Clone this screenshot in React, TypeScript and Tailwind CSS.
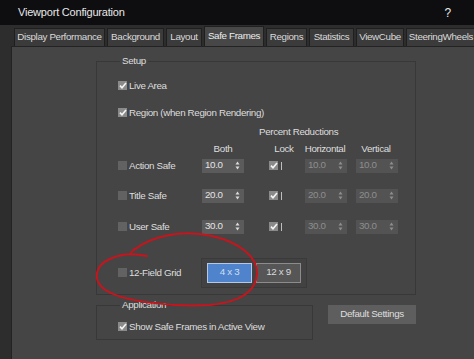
import React from "react";

const tabs = [
  { name: "Display Performance", w: "w-[91px]" },
  { name: "Background", w: "w-[57px]" },
  { name: "Layout", w: "w-[36px]" },
  { name: "Safe Frames", w: "w-[60px]", active: true },
  { name: "Regions", w: "w-[41px]" },
  { name: "Statistics", w: "w-[45px]" },
  { name: "ViewCube", w: "w-[48px]" },
  { name: "SteeringWheels", w: "w-[70px]" },
];

function Check({ on }: { on?: boolean }) {
  return (
    <span
      className={`flex h-[9px] w-[9px] shrink-0 items-center justify-center ${
        on ? "bg-[#8a8a8a]" : "bg-[#626262]"
      }`}
    >
      {on && (
        <svg width="8" height="7" viewBox="0 0 8 7">
          <path d="M1 3.6 L3 5.8 L7 1" stroke="#f4f4f4" strokeWidth="1.6" fill="none" />
        </svg>
      )}
    </span>
  );
}

function Spinner({ value, disabled }: { value: string; disabled?: boolean }) {
  return (
    <div
      className={`flex h-[14px] w-[42px] items-center justify-between pl-[3px] pr-[4px] ${
        disabled ? "bg-[#535353] text-[#8e8e8e]" : "bg-[#5b5b5b] text-[#e4e4e4]"
      }`}
    >
      <span>{value}</span>
      <svg width="5" height="9" viewBox="0 0 5 9">
        <path d="M2.5 0.5 L4.5 3.5 L0.5 3.5 Z" fill={disabled ? "#8e8e8e" : "#dcdcdc"} />
        <path d="M2.5 8.5 L4.5 5.5 L0.5 5.5 Z" fill={disabled ? "#8e8e8e" : "#dcdcdc"} />
      </svg>
    </div>
  );
}

function SafeRow({ label, value, mt }: { label: string; value: string; mt: string }) {
  return (
    <div className={`flex h-[14px] items-center ${mt}`}>
      <div className="flex w-[84px] items-center gap-[2px]">
        <Check />
        <span className="translate-y-[1px]">{label}</span>
      </div>
      <Spinner value={value} />
      <div className="ml-[25px] flex w-[15px] items-center gap-[3px]">
        <Check on />
        <span className="h-[8px] w-[1px] bg-[#bdbdbd]" />
      </div>
      <div className="ml-[21px]">
        <Spinner value={value} disabled />
      </div>
      <div className="ml-[9px]">
        <Spinner value={value} disabled />
      </div>
    </div>
  );
}

export default function App() {
  return (
    <div className="relative flex h-[359px] w-[474px] flex-col overflow-hidden bg-[#2d2d2d] font-['Liberation_Sans',Arial,sans-serif] text-[9.8px] tracking-[-0.35px] text-[#dedede]">
      <div className="flex h-[25px] shrink-0 items-center justify-between bg-[#0e0e11] pl-[18px] pr-[23px] text-[11px] tracking-[-0.2px] text-[#e8e8e8]">
        <span>Viewport Configuration</span>
        <span className="text-[12px]">?</span>
      </div>

      <div className="flex flex-1">
        <div className="w-[11px] shrink-0" />
        <div className="flex flex-1 flex-col">
          <div className="flex h-[21px] shrink-0 items-end gap-[2px] pl-[3px]">
            {tabs.map((t) => (
              <div
                key={t.name}
                className={`flex h-[18px] shrink-0 items-center justify-center whitespace-nowrap border border-b-0 border-[#1f1f1f] ${t.w} ${
                  t.active ? "h-[20px] bg-[#474747] text-[#ececec]" : "bg-[#3b3b3b] text-[#dadada]"
                }`}
              >
                {t.name}
              </div>
            ))}
          </div>

          <div className="flex flex-1 flex-col border-l border-t border-[#232323] bg-[#454545] pl-[84px] pt-[7px]">
            <fieldset className="h-[241px] w-[320px] border border-[#383838] pl-[21px]">
              <legend className="ml-[2px] px-[2px]">Setup</legend>
              <div className="mt-[10px] flex h-[14px] items-center gap-[2px]">
                <Check on />
                <span className="translate-y-[1px]">Live Area</span>
              </div>
              <div className="mt-[13px] flex h-[14px] items-center gap-[2px]">
                <Check on />
                <span className="translate-y-[1px]">Region (when Region Rendering)</span>
              </div>
              <div className="ml-[141px] mt-[5px] h-[12px]">Percent Reductions</div>
              <div className="mt-[5px] flex h-[12px]">
                <span className="ml-[84px] w-[42px] text-center">Both</span>
                <span className="ml-[25px] w-[30px] text-center">Lock</span>
                <span className="ml-[5px] w-[42px] text-center">Horizontal</span>
                <span className="ml-[9px] w-[42px] text-center">Vertical</span>
              </div>
              <SafeRow label="Action Safe" value="10.0" mt="mt-[5px]" />
              <SafeRow label="Title Safe" value="20.0" mt="mt-[16px]" />
              <SafeRow label="User Safe" value="30.0" mt="mt-[17px]" />

              <div className="mt-[24px] flex items-center">
                <div className="flex w-[83px] items-center gap-[2px]">
                  <Check />
                  <span className="translate-y-[1px]">12-Field Grid</span>
                </div>
                <div className="flex h-[30px] items-center gap-[4px] border border-[#3a3a3a] bg-[#424242] px-[5px]">
                  <div className="flex h-[20px] w-[45px] items-center justify-center border border-[#b4c9e6] bg-[#4f84cc] text-[#cfdff3]">
                    4 x 3
                  </div>
                  <div className="flex h-[20px] w-[45px] items-center justify-center border border-[#8c8c8c] bg-[#565656] text-[#dadada]">
                    12 x 9
                  </div>
                </div>
              </div>
            </fieldset>

            <div className="mt-[3px] flex items-start">
              <fieldset className="h-[42px] w-[217px] border border-[#383838] pl-[21px]">
                <legend className="ml-[2px] px-[2px]">Application</legend>
                <div className="mt-[7px] flex h-[14px] items-center gap-[2px]">
                  <Check on />
                  <span className="translate-y-[1px]">Show Safe Frames in Active View</span>
                </div>
              </fieldset>
              <div className="ml-[15px] mt-[7px] flex h-[19px] w-[88px] items-center justify-center bg-[#5e5e5e] text-[#dedede]">
                Default Settings
              </div>
            </div>
          </div>
        </div>
      </div>

      <svg className="pointer-events-none absolute left-0 top-0" width="474" height="359">
        <path
          d="M134 250 C150 237, 180 229, 212 236 C238 242, 258 256, 257 274 C256 292, 240 302, 210 305 C172 307, 122 302, 104 289 C93 280, 94 266, 110 259 C118 255, 128 252, 147 256"
          stroke="#c8141c"
          strokeWidth="2"
          fill="none"
          strokeLinecap="round"
        />
        <path d="M130 254 L135 248" stroke="#c8141c" strokeWidth="1.6" fill="none" />
      </svg>
    </div>
  );
}
